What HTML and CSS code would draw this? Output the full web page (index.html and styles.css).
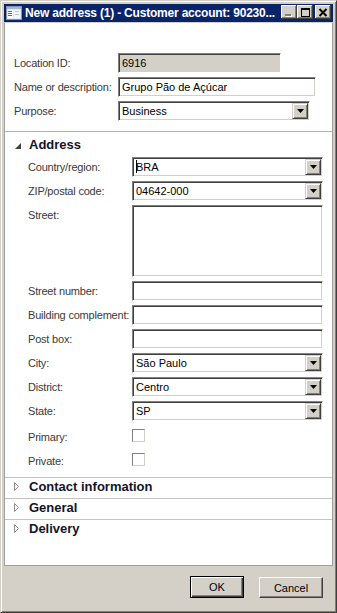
FILE: index.html
```html
<!DOCTYPE html>
<html>
<head>
<meta charset="utf-8">
<title>New address</title>
<link rel="stylesheet" href="styles.css">
</head>
<body>
<div class="window">
  <div class="titlebar">
    <svg class="app-icon" width="16" height="14" viewBox="0 0 16 14">
      <rect x="0.5" y="0.5" width="15" height="13" fill="#dfe8f4" stroke="#8a94a6"/>
      <rect x="1" y="1" width="14" height="2" fill="#9fb6d8"/>
      <rect x="2" y="4" width="5" height="8" fill="#ffffff"/>
      <rect x="2" y="5" width="4" height="1" fill="#3a6fc0"/>
      <rect x="2" y="7" width="4" height="1" fill="#3a6fc0"/>
      <rect x="2" y="9" width="4" height="1" fill="#3a6fc0"/>
      <rect x="8" y="4" width="6" height="8" fill="#f4f7fb"/>
      <rect x="9" y="5" width="4" height="1" fill="#b8c4d8"/>
      <rect x="9" y="8" width="4" height="1" fill="#b8c4d8"/>
    </svg>
    <span class="title">New address (1) - Customer account: 90230...</span>
    <div class="tbtns">
      <span class="tbtn"><svg width="14" height="12" viewBox="0 0 14 12"><rect x="4" y="9" width="6" height="2" fill="#ffffff"/><rect x="3" y="8" width="6" height="2" fill="#808080"/></svg></span>
      <span class="tbtn"><svg width="14" height="12" viewBox="0 0 14 12"><rect x="3" y="2" width="9" height="2" fill="#000"/><rect x="3" y="2" width="1" height="9" fill="#000"/><rect x="11" y="2" width="1" height="9" fill="#000"/><rect x="3" y="10" width="9" height="1" fill="#000"/></svg></span>
      <span class="tbtn close"><svg width="14" height="12" viewBox="0 0 14 12"><path d="M3.5 3 L10.5 10 M10.5 3 L3.5 10" stroke="#000" stroke-width="2" fill="none"/></svg></span>
    </div>
  </div>

  <div class="panel">
    <div class="form form-top">
      <span class="lbl">Location ID:</span>
      <div class="field disabled w-loc">6916</div>
      <span class="lbl">Name or description:</span>
      <div class="field w-name">Grupo Pão de Açúcar</div>
      <span class="lbl">Purpose:</span>
      <div class="field combo w-purp"><span class="val">Business</span><span class="dd"><svg width="7" height="4" viewBox="0 0 7 4"><path d="M0 0 H7 L3.5 4 Z" fill="#000"/></svg></span></div>
    </div>

    <section class="group">
      <div class="ghead"><svg class="tri tri-open" width="6" height="6" viewBox="0 0 6 6"><path d="M6 0 V6 H0 Z" fill="#404040"/></svg>Address</div>
      <div class="form form-addr">
        <span class="lbl">Country/region:</span>
        <div class="field combo"><span class="val"><span class="caret"></span>BRA</span><span class="dd"><svg width="7" height="4" viewBox="0 0 7 4"><path d="M0 0 H7 L3.5 4 Z" fill="#000"/></svg></span></div>
        <span class="lbl">ZIP/postal code:</span>
        <div class="field combo"><span class="val">04642-000</span><span class="dd"><svg width="7" height="4" viewBox="0 0 7 4"><path d="M0 0 H7 L3.5 4 Z" fill="#000"/></svg></span></div>
        <span class="lbl">Street:</span>
        <div class="field area"></div>
        <span class="lbl">Street number:</span>
        <div class="field"></div>
        <span class="lbl">Building complement:</span>
        <div class="field"></div>
        <span class="lbl">Post box:</span>
        <div class="field"></div>
        <span class="lbl">City:</span>
        <div class="field combo"><span class="val">São Paulo</span><span class="dd"><svg width="7" height="4" viewBox="0 0 7 4"><path d="M0 0 H7 L3.5 4 Z" fill="#000"/></svg></span></div>
        <span class="lbl">District:</span>
        <div class="field combo"><span class="val">Centro</span><span class="dd"><svg width="7" height="4" viewBox="0 0 7 4"><path d="M0 0 H7 L3.5 4 Z" fill="#000"/></svg></span></div>
        <span class="lbl">State:</span>
        <div class="field combo"><span class="val">SP</span><span class="dd"><svg width="7" height="4" viewBox="0 0 7 4"><path d="M0 0 H7 L3.5 4 Z" fill="#000"/></svg></span></div>
        <span class="lbl lbl-chk">Primary:</span>
        <div class="chk-cell"><span class="chk"></span></div>
        <span class="lbl lbl-chk">Private:</span>
        <div class="chk-cell"><span class="chk"></span></div>
      </div>
    </section>

    <section class="group collapsed">
      <div class="ghead"><svg class="tri tri-closed" width="6" height="9" viewBox="0 0 6 9"><path d="M0.5 0.5 L4.5 4.5 L0.5 8.5 Z" fill="#fff" stroke="#8c8c8c"/></svg>Contact information</div>
    </section>
    <section class="group collapsed">
      <div class="ghead"><svg class="tri tri-closed" width="6" height="9" viewBox="0 0 6 9"><path d="M0.5 0.5 L4.5 4.5 L0.5 8.5 Z" fill="#fff" stroke="#8c8c8c"/></svg>General</div>
    </section>
    <section class="group collapsed last">
      <div class="ghead"><svg class="tri tri-closed" width="6" height="9" viewBox="0 0 6 9"><path d="M0.5 0.5 L4.5 4.5 L0.5 8.5 Z" fill="#fff" stroke="#8c8c8c"/></svg>Delivery</div>
    </section>
  </div>

  <div class="footer">
    <button class="btn btn-ok">OK</button>
    <button class="btn btn-cancel">Cancel</button>
  </div>
</div>
</body>
</html>
```

FILE: styles.css
```css
* { box-sizing: border-box; }
html, body { margin: 0; padding: 0; }
body {
  background: #d4d0c8;
  font-family: "Liberation Sans", Arial, sans-serif;
  font-size: 11px;
  color: #000;
}
.window {
  width: 337px;
  height: 613px;
  display: flex;
  flex-direction: column;
  background: #d4d0c8;
  border: 1px solid;
  border-color: #d4d0c8 #404040 #404040 #d4d0c8;
  box-shadow: inset 1px 1px #ffffff, inset -1px -1px #808080;
  padding: 3px;
}
.titlebar {
  height: 18px;
  flex: none;
  background: #0a246a;
  display: flex;
  align-items: center;
  padding: 0 2px;
}
.app-icon { flex: none; display: block; }
.title {
  margin-left: 3px;
  color: #fff;
  font-weight: bold;
  font-size: 12px;
  letter-spacing: -0.2px;
  white-space: nowrap;
  flex: 1;
  min-width: 0;
}
.tbtns {
  display: flex;
  align-self: flex-start;
  margin-top: 1px;
  flex: none;
}
.tbtn {
  width: 16px;
  height: 14px;
  background: #d4d0c8;
  box-shadow: inset -1px -1px #404040, inset 1px 1px #ffffff, inset -2px -2px #808080;
  display: flex;
  align-items: center;
  justify-content: center;
}
.tbtn svg { display: block; }
.tbtn.close { margin-left: 2px; }

.panel {
  flex: 1;
  margin-top: 1px;
  background: #fff;
  border-left: 1px solid #a0a0a0;
  border-right: 1px solid #a0a0a0;
}
.form {
  display: grid;
  grid-template-columns: 104px auto;
  row-gap: 4px;
  justify-content: start;
  align-items: start;
}
.form-top {
  padding: 30px 0 10px 9px;
  border-bottom: 1px solid #b4b4b4;
}
.form-addr {
  padding: 0 0 8px 23px;
  grid-template-columns: 104px 191px;
}
.lbl {
  line-height: 20px;
  height: 20px;
  color: #3a3a3a;
  white-space: nowrap;
  letter-spacing: -0.2px;
}
.lbl-chk { line-height: 16px; padding-top: 4px; }

.field {
  height: 20px;
  border: 1px solid;
  border-color: #808080 #ffffff #ffffff #808080;
  box-shadow: inset 1px 1px #404040, inset -1px -1px #d4d0c8;
  background: #fff;
  padding: 0 3px;
  line-height: 18px;
  white-space: nowrap;
  color: #000;
}
.field.disabled { background: #d4d0c8; }
.w-loc { width: 163px; }
.w-name { width: 198px; }
.w-purp { width: 192px; }
.field.area { height: 72px; }

.combo {
  display: flex;
  align-items: stretch;
  padding: 1px;
}
.combo .val {
  flex: 1;
  padding-left: 2px;
  line-height: 16px;
}
.caret {
  display: inline-block;
  width: 1px;
  height: 13px;
  background: #000;
  vertical-align: -2px;
  margin-right: -1px;
}
.dd {
  width: 16px;
  flex: none;
  background: #d4d0c8;
  border: 1px solid;
  border-color: #d4d0c8 #404040 #404040 #d4d0c8;
  box-shadow: inset 1px 1px #ffffff, inset -1px -1px #808080;
  display: flex;
  align-items: center;
  justify-content: center;
}
.dd svg { display: block; }

.chk-cell { height: 20px; padding-top: 4px; }
.chk {
  display: block;
  width: 13px;
  height: 13px;
  border: 1px solid;
  border-color: #808080 #d4d0c8 #d4d0c8 #808080;
  background: #fff;
}

.group { border-bottom: 1px solid #c4c4c4; }
.group.last { border-bottom: none; }
.ghead {
  display: flex;
  align-items: center;
  font-size: 13px;
  font-weight: bold;
  color: #141428;
  line-height: 17px;
}
.group:not(.collapsed) .ghead {
  padding: 4px 0 4px 10px;
}
.group.collapsed .ghead {
  padding: 0 0 3px 9px;
}
.tri { flex: none; display: block; }
.tri-open { margin-right: 8px; margin-top: 3px; }
.tri-closed { margin-right: 9px; }

.footer {
  flex: none;
  height: 44px;
  border-top: 1px solid #a0a0a0;
  display: flex;
  justify-content: flex-end;
  align-items: flex-start;
  padding: 10px 10px 0 0;
  gap: 15px;
}
.btn {
  font-family: "Liberation Sans", Arial, sans-serif;
  font-size: 11px;
  color: #000;
  background: #d4d0c8;
  padding: 0;
  margin: 0;
  border: 1px solid;
  border-color: #ffffff #404040 #404040 #ffffff;
  box-shadow: inset -1px -1px #808080;
  height: 22px;
}
.btn-ok {
  width: 54px;
  border-color: #000;
  box-shadow: inset 1px 1px #ffffff, inset -1px -1px #404040, inset -2px -2px #808080;
}
.btn-cancel {
  width: 64px;
  height: 21px;
  margin-top: 1px;
}
```
